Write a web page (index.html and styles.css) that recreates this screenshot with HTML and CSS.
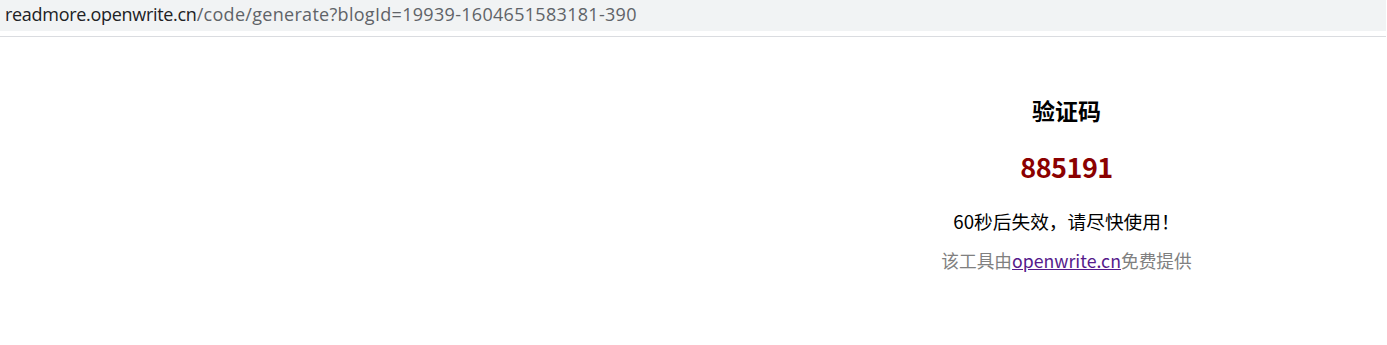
FILE: index.html
```html
<!DOCTYPE html>
<html lang="zh-CN">
<head>
<meta charset="utf-8">
<title>验证码</title>
<link rel="stylesheet" href="styles.css">
</head>
<body>
<div class="urlbar"><span class="host">readmore.openwrite.cn</span><span class="path">/code/generate?blogId=19939-1604651583181-390</span></div>
<div class="divider"></div>
<main class="page">
  <div class="spacer"></div>
  <section class="card">
    <h3 class="title">验证码</h3>
    <div class="code">885191</div>
    <p class="tip">60秒后失效，请尽快使用！</p>
    <p class="credit">该工具由<a href="#" class="link">openwrite.cn</a>免费提供</p>
  </section>
</main>
</body>
</html>
```
FILE: styles.css
```css
html, body {
  margin: 0;
  padding: 0;
  background: #fff;
  font-family: "Noto Sans CJK SC", "Noto Sans", sans-serif;
}
.urlbar {
  height: 31px;
  width: 1386px;
  background: #f1f3f4;
  box-sizing: border-box;
  padding-left: 5px;
  font-family: "Open Sans", "Noto Sans CJK SC", sans-serif;
  font-size: 18px;
  line-height: 28px;
  white-space: nowrap;
}
.host { color: #202124; letter-spacing: -0.3px; }
.path { color: #5f6368; letter-spacing: 0.3px; }
.divider {
  margin-top: 5px;
  height: 1px;
  width: 1386px;
  background: #dadce0;
}
.page {
  display: grid;
  grid-template-columns: 746px 1fr;
}
.card {
  text-align: center;
  padding-top: 58px;
}
.title {
  margin: 0;
  font-size: 23px;
  font-weight: bold;
  line-height: 30px;
  color: #000;
}
.code {
  margin-top: 24px;
  font-size: 27px;
  font-weight: bold;
  line-height: 36px;
  letter-spacing: -0.5px;
  color: #8b0000;
}
.tip {
  margin: 23px 0 0;
  font-size: 18.7px;
  line-height: 26px;
  color: #000;
}
.credit {
  margin: 13px 0 0;
  font-size: 17.7px;
  line-height: 26px;
  color: #808080;
}
.link { color: #551a8b; text-decoration: underline; }
```
